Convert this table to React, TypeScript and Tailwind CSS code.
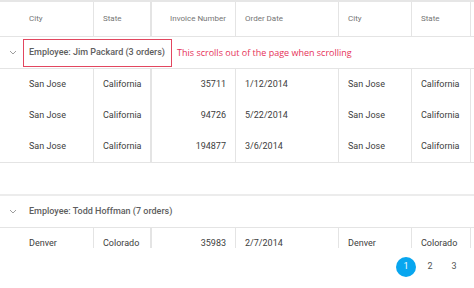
import React from 'react'

const grid = 'grid grid-cols-[20px_73px_57px_85px_103px_73px_59px_1fr]'

const headers = ['City', 'State', 'Invoice Number', 'Order Date', 'City', 'State', '']

const group1 = [
  ['San Jose', 'California', '35711', '1/12/2014', 'San Jose', 'California'],
  ['San Jose', 'California', '94726', '5/22/2014', 'San Jose', 'California'],
  ['San Jose', 'California', '194877', '3/6/2014', 'San Jose', 'California'],
]

const group2 = [['Denver', 'Colorado', '35983', '2/7/2014', 'Denver', 'Colorado']]

const Chevron = () => (
  <svg width="8" height="5" viewBox="0 0 8 5" className="text-[#9e9e9e]">
    <path d="M1 1l3 3 3-3" fill="none" stroke="currentColor" strokeWidth="1" />
  </svg>
)

const cellBorder = (i: number) =>
  i === 0 ? '' : i === 2 ? 'border-l-2 border-[#e4e4e4]' : 'border-l border-[#e4e4e4]'

const DataRow = ({ cells }: { cells: string[] }) => (
  <div className={`${grid} h-[31px] text-[9px] text-[#3d3d3d]`}>
    <div />
    {[...cells, ''].map((c, i) => (
      <div
        key={i}
        className={`flex items-center ${cellBorder(i)} ${i === 2 ? 'justify-end pr-[9px]' : 'pl-[9px]'}`}
      >
        {c}
      </div>
    ))}
  </div>
)

const GroupRow = ({ caption, note }: { caption: string; note?: string }) => (
  <div className="flex items-center h-[32px] border-b border-[#e4e4e4]">
    <div className="w-[20px] flex justify-center pl-[6px]">
      <Chevron />
    </div>
    {note ? (
      <>
        <div className="ml-[3px] h-[28px] flex items-center pl-[5px] pr-[6px] border-[1.5px] border-[#e2465f] text-[9px] font-medium text-[#5e5e5e]">
          {caption}
        </div>
        <span className="ml-[5px] text-[9px] text-[#e63158] font-['Open_Sans',sans-serif]">{note}</span>
      </>
    ) : (
      <div className="ml-[9px] text-[9px] font-medium text-[#5e5e5e]">{caption}</div>
    )}
  </div>
)

export default function App() {
  return (
    <div className="w-[474px] h-[288px] bg-white overflow-hidden font-['Roboto',sans-serif]">
      <div className="h-[2px] bg-[#e6e6e6]" />
      <div className={`${grid} h-[35px] border-b border-[#e4e4e4] text-[8px] text-[#757575]`}>
        <div />
        {headers.map((h, i) => (
          <div
            key={i}
            className={`flex items-center ${cellBorder(i)} ${i === 2 ? 'justify-end pr-[9px]' : 'pl-[9px]'}`}
          >
            {h}
          </div>
        ))}
      </div>
      <GroupRow caption="Employee: Jim Packard (3 orders)" note="This scrolls out of the page when scrolling" />
      <div className="border-b border-[#e4e4e4]">
        {group1.map((r, i) => (
          <DataRow key={i} cells={r} />
        ))}
      </div>
      <div className="h-[31px]" />
      <div className="h-[2px] bg-[#ececec]" />
      <GroupRow caption="Employee: Todd Hoffman (7 orders)" />
      <div className="h-[20px] overflow-hidden">
        {group2.map((r, i) => (
          <DataRow key={i} cells={r} />
        ))}
      </div>
      <div className="flex justify-end items-center gap-[4px] pr-[10px] pt-[9px] text-[9px] text-[#555555]">
        <div className="w-[20px] h-[20px] rounded-full bg-[#08a6ef] text-white flex items-center justify-center">1</div>
        <div className="w-[20px] h-[20px] flex items-center justify-center">2</div>
        <div className="w-[20px] h-[20px] flex items-center justify-center">3</div>
      </div>
    </div>
  )
}
